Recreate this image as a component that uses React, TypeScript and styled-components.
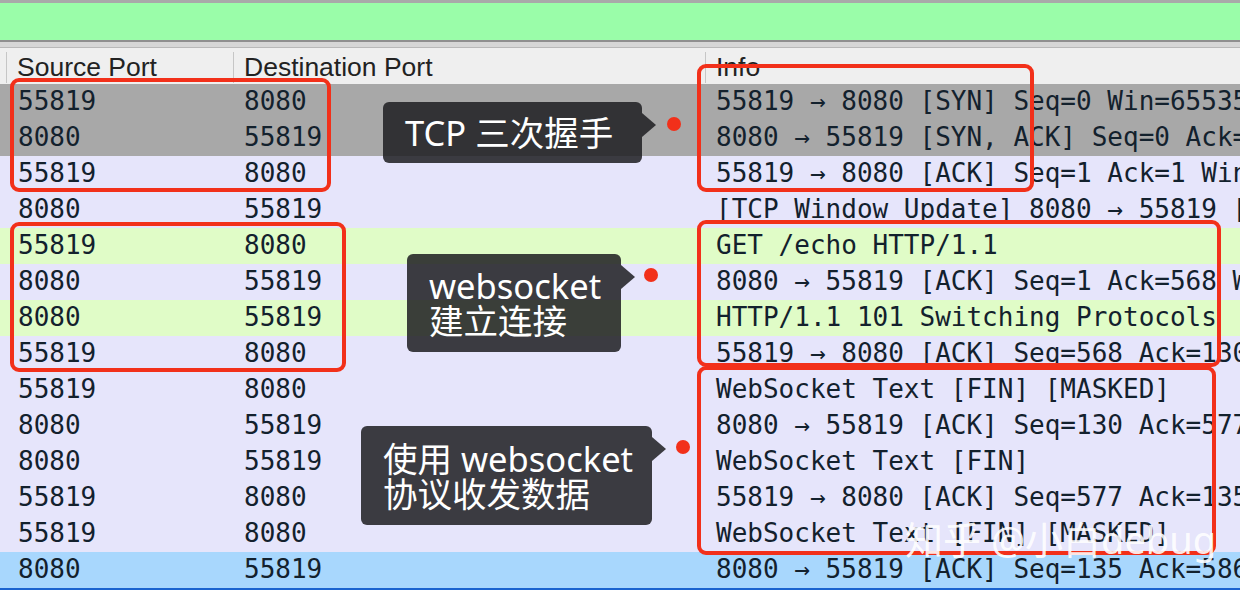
import React from 'react';
import styled, { createGlobalStyle } from 'styled-components';

const GlobalStyle = createGlobalStyle`
	html, body {
		margin: 0;
		padding: 0;
		background: #ffffff;
	}
`;

const Frame = styled.div`
	position: relative;
	width: 1240px;
	height: 590px;
	overflow: hidden;
	background: #e6e5fb;
	display: flex;
	flex-direction: column;
`;

const TopEdge = styled.div`
	height: 3px;
	background: #a9a9a9;
`;

const FilterBar = styled.div`
	height: 37px;
	background: #9afda9;
`;

const Splitter = styled.div`
	height: 5px;
	border-top: 2px solid #8f8f8f;
	border-bottom: 1px solid #b8b8b8;
	background: #d6d6d6;
`;

const Header = styled.div`
	height: 36px;
	box-sizing: border-box;
	padding-bottom: 2px;
	background: #efefef;
	display: grid;
	grid-template-columns: 233px 472px 1fr;
	font-family: 'Liberation Sans', Arial, sans-serif;
	font-size: 26.5px;
	color: #222;
`;

const HeaderCell = styled.div`
	display: flex;
	align-items: center;
	padding-left: 10px;
	border-left: 1px solid #c6c6c6;
	margin: 4px 0;
	white-space: nowrap;

	&:first-child {
		margin-left: 6px;
	}
`;

const Rows = styled.div`
	display: flex;
	flex-direction: column;
	font-family: 'DejaVu Sans Mono', 'Liberation Mono', monospace;
	font-size: 26px;
	color: #13212d;
`;

const rowColors: Record<string, string> = {
	gray: '#a8a8a8',
	plain: '#e6e5fb',
	green: '#e0fcc7',
	selected: '#a8d7fd',
};

const Row = styled.div<{ $tone: string }>`
	height: 36px;
	box-sizing: border-box;
	padding-bottom: 3px;
	display: grid;
	grid-template-columns: 226px 472px 1fr;
	align-items: center;
	background: ${(p) => rowColors[p.$tone]};
	white-space: nowrap;
	overflow: hidden;
`;

const Cell = styled.div`
	padding-left: 18px;
	overflow: hidden;
`;

const InfoCell = styled.div`
	padding-left: 18px;
	overflow: hidden;
`;

const BottomEdge = styled.div`
	height: 2px;
	background: #1b63cf;
`;

const Box = styled.div<{ $x: number; $y: number; $w: number; $h: number }>`
	position: absolute;
	left: ${(p) => p.$x}px;
	top: ${(p) => p.$y}px;
	width: ${(p) => p.$w}px;
	height: ${(p) => p.$h}px;
	box-sizing: border-box;
	border: 4px solid #f2301a;
	border-radius: 9px;
`;

const Callout = styled.div<{ $x: number; $y: number; $w: number; $h: number }>`
	position: absolute;
	left: ${(p) => p.$x}px;
	top: ${(p) => p.$y}px;
	width: ${(p) => p.$w}px;
	height: ${(p) => p.$h}px;
	box-sizing: border-box;
	padding: 0 0 0 22px;
	display: flex;
	flex-direction: column;
	justify-content: center;
	background: rgba(30, 30, 34, 0.86);
	border-radius: 6px;
	color: #ffffff;
	font-family: 'Noto Sans', 'Noto Sans CJK SC', sans-serif;
	font-size: 34.5px;
	line-height: 35px;
	white-space: nowrap;

	&::after {
		content: '';
		position: absolute;
		right: -14px;
		top: 11px;
		border-top: 12px solid transparent;
		border-bottom: 12px solid transparent;
		border-left: 14px solid rgba(30, 30, 34, 0.86);
	}
`;

const Dot = styled.div<{ $x: number; $y: number }>`
	position: absolute;
	left: ${(p) => p.$x - 7}px;
	top: ${(p) => p.$y - 7}px;
	width: 14px;
	height: 14px;
	border-radius: 50%;
	background: #f2301a;
`;

const Watermark = styled.div`
	position: absolute;
	left: 905px;
	top: 510px;
	font-family: 'Noto Sans', 'Noto Sans CJK SC', sans-serif;
	font-size: 38px;
	color: rgba(255, 255, 255, 0.9);
	white-space: nowrap;
`;

const packets = [
	{ src: '55819', dst: '8080', info: '55819 → 8080 [SYN] Seq=0 Win=65535 Len=0 MSS=1460', tone: 'gray' },
	{ src: '8080', dst: '55819', info: '8080 → 55819 [SYN, ACK] Seq=0 Ack=1 Win=65535 Len=0', tone: 'gray' },
	{ src: '55819', dst: '8080', info: '55819 → 8080 [ACK] Seq=1 Ack=1 Win=408256 Len=0', tone: 'plain' },
	{ src: '8080', dst: '55819', info: ' [TCP Window Update] 8080 → 55819 [ACK] Seq=1', tone: 'plain' },
	{ src: '55819', dst: '8080', info: 'GET /echo HTTP/1.1', tone: 'green' },
	{ src: '8080', dst: '55819', info: '8080 → 55819 [ACK] Seq=1 Ack=568 Win=407680', tone: 'plain' },
	{ src: '8080', dst: '55819', info: 'HTTP/1.1 101 Switching Protocols', tone: 'green' },
	{ src: '55819', dst: '8080', info: '55819 → 8080 [ACK] Seq=568 Ack=130 Win=408128', tone: 'plain' },
	{ src: '55819', dst: '8080', info: 'WebSocket Text [FIN] [MASKED]', tone: 'plain' },
	{ src: '8080', dst: '55819', info: '8080 → 55819 [ACK] Seq=130 Ack=577 Win=407680', tone: 'plain' },
	{ src: '8080', dst: '55819', info: 'WebSocket Text [FIN]', tone: 'plain' },
	{ src: '55819', dst: '8080', info: '55819 → 8080 [ACK] Seq=577 Ack=135 Win=408128', tone: 'plain' },
	{ src: '55819', dst: '8080', info: 'WebSocket Text [FIN] [MASKED]', tone: 'plain' },
	{ src: '8080', dst: '55819', info: '8080 → 55819 [ACK] Seq=135 Ack=586 Win=407680', tone: 'selected' },
];

const boxes = [
	{ x: 10, y: 78, w: 321, h: 114 },
	{ x: 697, y: 64, w: 337, h: 128 },
	{ x: 10, y: 222, w: 336, h: 150 },
	{ x: 697, y: 220, w: 524, h: 147 },
	{ x: 697, y: 366, w: 519, h: 189 },
];

const callouts = [
	{ x: 383, y: 102, w: 259, h: 61, lines: ['TCP 三次握手'], dot: { x: 674, y: 124 } },
	{ x: 407, y: 254, w: 214, h: 98, lines: ['websocket', '建立连接'], dot: { x: 651, y: 275 } },
	{ x: 361, y: 426, w: 291, h: 99, lines: ['使用 websocket', '协议收发数据'], dot: { x: 683, y: 447 } },
];

function App() {
	return (
		<>
			<GlobalStyle />
			<Frame>
				<TopEdge />
				<FilterBar />
				<Splitter />
				<Header>
					<HeaderCell>Source Port</HeaderCell>
					<HeaderCell>Destination Port</HeaderCell>
					<HeaderCell>Info</HeaderCell>
				</Header>
				<Rows>
					{packets.map((p, i) => (
						<Row key={i} $tone={p.tone}>
							<Cell>{p.src}</Cell>
							<Cell>{p.dst}</Cell>
							<InfoCell>{p.info}</InfoCell>
						</Row>
					))}
				</Rows>
				<BottomEdge />

				{boxes.map((b, i) => (
					<Box key={i} $x={b.x} $y={b.y} $w={b.w} $h={b.h} />
				))}
				{callouts.map((c, i) => (
					<React.Fragment key={i}>
						<Callout $x={c.x} $y={c.y} $w={c.w} $h={c.h}>
							{c.lines.map((l) => (
								<div key={l}>{l}</div>
							))}
						</Callout>
						<Dot $x={c.dot.x} $y={c.dot.y} />
					</React.Fragment>
				))}
				<Watermark>知乎 @小白debug</Watermark>
			</Frame>
		</>
	);
}

export default App;
